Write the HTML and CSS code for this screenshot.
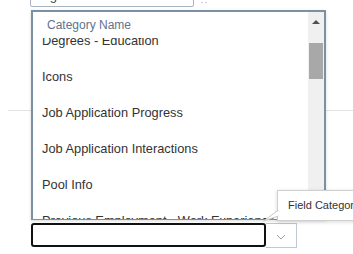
FILE: index.html
```html
<!DOCTYPE html>
<html>
<head>
<meta charset="utf-8">
<link rel="stylesheet" href="styles.css">
</head>
<body>
<div class="page">
  <div class="top-row">
    <div class="top-input">Age</div>
    <span class="top-hint">··</span>
  </div>
  <div class="spacer-a"></div>
  <hr class="rule">
  <div class="spacer-b"></div>
  <div class="select-row">
    <div class="select-box"></div>
    <div class="select-btn">
      <svg width="10" height="6" viewBox="0 0 10 6"><path d="M1 1 L5 5 L9 1" fill="none" stroke="#9aa3ad" stroke-width="1"/></svg>
    </div>
  </div>

  <div class="dropdown">
    <div class="dd-header">Category Name</div>
    <div class="dd-viewport">
      <ul class="dd-list">
        <li>Degrees - Education</li>
        <li>Icons</li>
        <li>Job Application Progress</li>
        <li>Job Application Interactions</li>
        <li>Pool Info</li>
        <li>Previous Employment - Work Experience</li>
      </ul>
    </div>
    <div class="scrollbar">
      <div class="sb-up"></div>
      <div class="sb-thumb"></div>
    </div>
  </div>

  <div class="tooltip">
    <svg class="tip-tail" width="16" height="12" viewBox="0 0 16 12"><path d="M15.5 0 L0.5 11 L15.5 6" fill="#fff" stroke="#c8c8c8" stroke-width="1"/></svg>
    <span>Field Category</span>
  </div>
</div>
</body>
</html>
```

FILE: styles.css
```css
* { box-sizing: border-box; }
html, body { margin: 0; padding: 0; background: #fff; }
body { font-family: "Liberation Sans", Arial, sans-serif; color: #333; }

.page {
  position: relative;
  width: 353px;
  height: 254px;
  overflow: hidden;
}

.top-row {
  display: flex;
  align-items: flex-end;
  margin-left: 30px;
  margin-top: -14px;
  height: 21px;
}
.top-input {
  width: 164px;
  height: 21px;
  border: 1px solid #a9b3bf;
  border-radius: 2px;
  font-size: 13px;
  line-height: 13px;
  padding-left: 10px;
  padding-top: 2px;
  color: #444;
}
.top-hint {
  margin-left: 6px;
  font-size: 12px;
  line-height: 12px;
  color: #bbb;
  align-self: flex-start;
  margin-top: 10px;
}

.spacer-a { height: 103px; }
.rule {
  margin: 0 0 0 8px;
  border: 0;
  border-top: 1px solid #e3e3e3;
  height: 0;
}
.spacer-b { height: 112px; }

.select-row {
  display: flex;
  margin-left: 31px;
}
.select-box {
  width: 235px;
  height: 24px;
  border: 2px solid #111;
  border-radius: 3px;
}
.select-btn {
  width: 31px;
  height: 25px;
  border: 1px solid #bfc9d3;
  border-left: 0;
  display: flex;
  align-items: center;
  justify-content: center;
  padding-top: 2px;
}

.dropdown {
  position: absolute;
  left: 31px;
  top: 10px;
  width: 295px;
  height: 210px;
  border: 2px solid #7b90a3;
  border-bottom-width: 1px;
  background: #fff;
  box-shadow: 0 1px 3px rgba(0,0,0,0.15);
}
.dd-header {
  height: 26px;
  font-size: 12px;
  color: #5f7391;
  padding-left: 14px;
  padding-top: 6px;
  line-height: 14px;
  background: #fff;
}
.dd-viewport {
  height: 181px;
  overflow: hidden;
}
.dd-list {
  list-style: none;
  margin: -15px 0 0 0;
  padding: 0;
}
.dd-list li {
  height: 36px;
  line-height: 36px;
  font-size: 12.8px;
  padding-left: 9px;
  color: #333;
  white-space: nowrap;
}

.scrollbar {
  position: absolute;
  right: 0;
  top: 0;
  bottom: 0;
  width: 16px;
  background: #f0f0f0;
}
.sb-up {
  margin: 8px auto 0;
  width: 0;
  height: 0;
  border-left: 4px solid transparent;
  border-right: 4px solid transparent;
  border-bottom: 4px solid #505050;
}
.sb-thumb {
  margin: 19px 1px 0 1px;
  height: 36px;
  background: #a8a8a8;
}

.tooltip {
  position: absolute;
  left: 277px;
  top: 190px;
  width: 100px;
  height: 31px;
  border: 1px solid #cfcfcf;
  background: #fff;
  box-shadow: 0 1px 4px rgba(0,0,0,0.15);
  font-size: 11px;
  line-height: 29px;
  padding-left: 10px;
  color: #333;
  white-space: nowrap;
}
.tip-tail {
  position: absolute;
  left: -15px;
  top: 19px;
}
```
